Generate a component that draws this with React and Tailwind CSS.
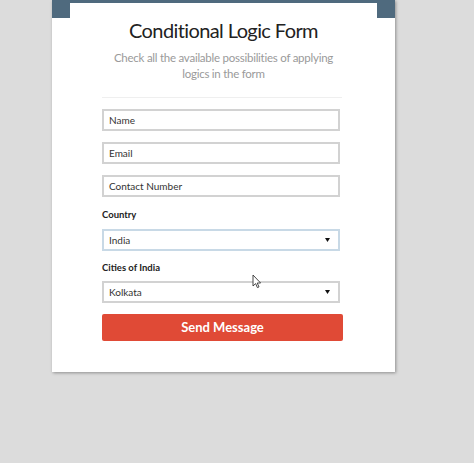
import React from "react";

const fieldBase =
  "h-[22px] w-full border-2 border-[#d2d2d2] bg-white px-[5px] flex items-center text-[10px] text-[#333]";

function Caret() {
  return (
    <svg width="5" height="4" viewBox="0 0 5 4" className="ml-auto mr-[3px]">
      <path d="M0 0 L5 0 L2.5 4 Z" fill="#111" />
    </svg>
  );
}

function Pointer() {
  return (
    <svg
      width="10"
      height="15"
      viewBox="0 0 10 15"
      className="absolute left-[252px] top-[274px]"
    >
      <path
        d="M1 1 L1 12 L3.6 9.6 L5.4 13.6 L7 12.9 L5.2 9 L8.6 9 Z"
        fill="#fff"
        stroke="#333"
        strokeWidth="0.9"
        strokeLinejoin="round"
      />
    </svg>
  );
}

export default function App() {
  return (
    <div
      className="relative min-h-[463px] w-full bg-[#dcdcdc]"
      style={{ fontFamily: "Lato, 'Open Sans', sans-serif" }}
    >
      <div className="ml-[52px] w-[343px] h-[372px] bg-white shadow-[1px_1px_3px_rgba(0,0,0,0.35)]">
        <div className="h-[18px] bg-[#4f6a7e] px-[18px] pt-[3px]">
          <div className="h-full bg-white" />
        </div>

        <h1 className="text-center text-[20px] leading-[24px] tracking-[-0.6px] text-[#222]">
          Conditional Logic Form
        </h1>
        <p className="mt-[8px] px-[50px] text-center text-[11.5px] leading-[16px] tracking-[-0.25px] text-[#9a9a9a]">
          Check all the available possibilities of applying logics in the form
        </p>

        <div className="ml-[50px] w-[240px]">
          <div className="mt-[15px] h-px bg-[#efefef]" />

          <div className="mt-[11px] flex flex-col gap-[11px] pr-[2px]">
            <div className={fieldBase}>Name</div>
            <div className={fieldBase}>Email</div>
            <div className={fieldBase}>Contact Number</div>
          </div>

          <div className="mt-[11px] text-[9.5px] leading-[14px] font-bold text-[#222]">
            Country
          </div>
          <div className="mt-[7px] pr-[2px]">
            <div className="h-[22px] w-full border-2 border-[#c8d9e6] bg-white px-[5px] flex items-center text-[10px] text-[#333]">
              India
              <Caret />
            </div>
          </div>

          <div className="mt-[10px] text-[9.5px] leading-[14px] font-bold text-[#222]">
            Cities of India
          </div>
          <div className="mt-[6px] pr-[2px]">
            <div className={fieldBase}>
              Kolkata
              <Caret />
            </div>
          </div>

          <button className="mt-[11px] h-[27px] w-[241px] rounded-[2px] bg-[#e04a36] text-[13px] font-bold text-white">
            Send Message
          </button>
        </div>
      </div>
      <Pointer />
    </div>
  );
}
